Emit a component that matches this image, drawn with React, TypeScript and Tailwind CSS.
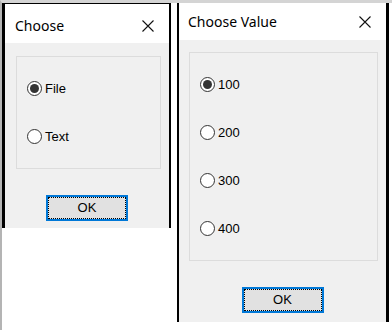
const Radio = ({ checked, label }: { checked?: boolean; label: string }) => (
  <div className="flex h-[16px] items-center">
    <svg width="15" height="15" viewBox="0 0 15 15" className="shrink-0">
      <circle cx="7.5" cy="7.5" r="7" fill="#fff" stroke="#333" strokeWidth="1" />
      {checked && <circle cx="7.5" cy="7.5" r="4.5" fill="#333" />}
    </svg>
    <span className="ml-[3px] text-[13px] leading-none text-black">{label}</span>
  </div>
);

const CloseX = () => (
  <svg width="12" height="12" viewBox="0 0 12 12" className="shrink-0">
    <path d="M0.5 0.5 L11.5 11.5 M11.5 0.5 L0.5 11.5" stroke="#111" strokeWidth="1.1" />
  </svg>
);

const OkButton = () => (
  <div className="mx-auto h-[26px] w-[82px] border-2 border-[#0078d7] bg-[#e1e1e1]">
    <div className="flex h-full items-center justify-center border border-dotted border-black text-[13px] text-black">
      OK
    </div>
  </div>
);

export default function App() {
  return (
    <div
      className="flex h-[330px] w-[392px] items-start gap-[6px] border-t-[3px] border-l-2 border-t-[#d4d4d4] border-l-[#b4b4b4] bg-white"
      style={{ fontFamily: '"Liberation Sans", Arial, sans-serif' }}
    >
      {/* left dialog */}
      <div className="flex h-[225px] w-[169px] flex-col border-t border-l-[3px] border-r-2 border-black">
        <div className="flex h-[39px] items-center justify-between bg-white pt-[4px] pl-[10px] pr-[15px]">
          <span className="text-[14px] leading-5 text-black" style={{ fontFamily: '"Noto Sans", sans-serif' }}>
            Choose
          </span>
          <CloseX />
        </div>
        <div className="flex-1 bg-[#f0f0f0] pt-[13px]">
          <div className="ml-[11px] h-[113px] w-[145px] border border-[#dcdcdc]">
            <div className="flex flex-col gap-[32px] pt-[23px] pl-[10px]">
              <Radio checked label="File" />
              <Radio label="Text" />
            </div>
          </div>
          <div className="mt-[26px]">
            <OkButton />
          </div>
        </div>
      </div>

      {/* right dialog */}
      <div className="flex h-[319px] w-[212px] flex-col border-l-2 border-r-[3px] border-black">
        <div className="flex h-[37px] items-center justify-between bg-white pl-[9px] pr-[15px]">
          <span className="text-[14px] leading-5 text-black" style={{ fontFamily: '"Noto Sans", sans-serif' }}>
            Choose Value
          </span>
          <CloseX />
        </div>
        <div className="flex-1 bg-[#f0f0f0] pt-[12px]">
          <div className="ml-[10px] h-[209px] w-[189px] border border-[#dcdcdc]">
            <div className="flex flex-col gap-[32px] pt-[23px] pl-[10px]">
              <Radio checked label="100" />
              <Radio label="200" />
              <Radio label="300" />
              <Radio label="400" />
            </div>
          </div>
          <div className="mt-[26px]">
            <OkButton />
          </div>
        </div>
      </div>
    </div>
  );
}
